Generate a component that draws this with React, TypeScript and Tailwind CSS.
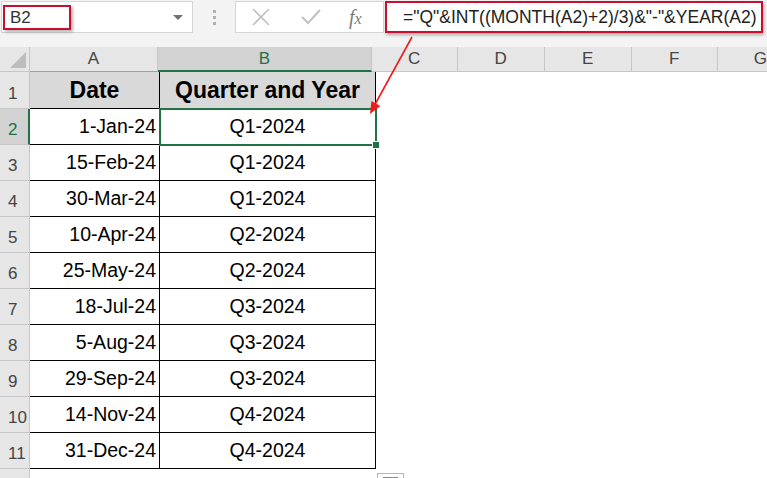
import React from "react";

const dates = ["1-Jan-24","15-Feb-24","30-Mar-24","10-Apr-24","25-May-24","18-Jul-24","5-Aug-24","29-Sep-24","14-Nov-24","31-Dec-24"];
const quarters = ["Q1-2024","Q1-2024","Q1-2024","Q2-2024","Q2-2024","Q3-2024","Q3-2024","Q3-2024","Q4-2024","Q4-2024"];

export default function App() {
  return (
    <div className="relative w-[767px] h-[478px] overflow-hidden bg-white font-['Liberation_Sans',Arial,sans-serif] text-black">
      {/* Toolbar */}
      <div className="h-[47px] bg-[#f3f3f3] flex items-start pt-[1px]">
        <div className="ml-[1px] w-[192px] h-[32px] bg-white border border-[#d6d6d6] flex items-center pl-[1px] pr-[9px]">
          <div className="w-[68px] h-[25px] border-2 border-[#c8102e] shadow-[2px_2px_3px_rgba(0,0,0,0.3)] flex items-center pl-[5px] text-[17px] text-[#333] leading-none">B2</div>
          <div className="flex-1" />
          <div className="w-0 h-0 border-l-[5px] border-r-[5px] border-t-[5px] border-l-transparent border-r-transparent border-t-[#707070]" />
        </div>
        <div className="w-[42px] h-[32px] flex flex-col items-center justify-center gap-[3px]">
          <div className="w-[3px] h-[3px] bg-[#b0b0b0]" />
          <div className="w-[3px] h-[3px] bg-[#b0b0b0]" />
          <div className="w-[3px] h-[3px] bg-[#b0b0b0]" />
        </div>
        <div className="w-[149px] h-[32px] bg-white border border-[#d6d6d6] flex items-center">
          <svg width="20" height="18" viewBox="0 0 20 18" className="ml-[15px]">
            <path d="M2 1 L18 17 M18 1 L2 17" stroke="#c0c0c0" strokeWidth="1.6" fill="none" />
          </svg>
          <svg width="22" height="18" viewBox="0 0 22 18" className="ml-[29px]">
            <path d="M2 9 L8 15 L20 2" stroke="#c0c0c0" strokeWidth="2" fill="none" />
          </svg>
          <span className="ml-[27px] font-['Liberation_Serif',serif] italic text-[20px] text-[#7a7a7a] leading-none">
            f<span className="text-[16px]">x</span>
          </span>
        </div>
        <div className="ml-[1px] w-[378px] h-[32px] bg-white border-2 border-[#c8102e] shadow-[1px_2px_3px_rgba(0,0,0,0.3)] flex items-center pl-[16px] text-[17.5px] text-[#222] whitespace-nowrap">
          ="Q"&amp;INT((MONTH(A2)+2)/3)&amp;"-"&amp;YEAR(A2)
        </div>
      </div>

      {/* Column headers */}
      <div className="flex h-[25px] bg-[#e6e6e6] text-[17px] text-[#444]">
        <div className="w-[30px] h-full border-r border-b border-[#c6c6c6] relative">
          <svg width="30" height="25" className="absolute left-0 top-0">
            <polygon points="26,5 26,21 10,21" fill="#bdbdbd" />
          </svg>
        </div>
        <div className="w-[130px] h-full border-r border-b border-[#c6c6c6] border-b-[#9e9e9e] flex items-center justify-center">A</div>
        <div className="w-[216px] h-full border-r border-[#c6c6c6] border-b-2 border-b-[#217346] bg-[#d2d2d2] text-[#217346] flex items-center justify-center">B</div>
        <div className="w-[87px] h-full border-r border-b border-[#c6c6c6] flex items-center justify-center">C</div>
        <div className="w-[88px] h-full border-r border-b border-[#c6c6c6] flex items-center justify-center">D</div>
        <div className="w-[88px] h-full border-r border-b border-[#c6c6c6] flex items-center justify-center">E</div>
        <div className="w-[87px] h-full border-r border-b border-[#c6c6c6] flex items-center justify-center">F</div>
        <div className="flex-1 h-full border-b border-[#c6c6c6] flex items-center pl-[36px]">G</div>
      </div>

      {/* Row 1 */}
      <div className="flex h-[37px]">
        <div className="w-[30px] h-full bg-[#e6e6e6] border-r border-b border-[#c6c6c6] flex items-end pl-[8px] pb-[2px] text-[17px] text-[#444]">1</div>
        <div className="w-[130px] h-full bg-[#d9d9d9] border-r border-b border-black flex items-center justify-center font-bold text-[23px]">Date</div>
        <div className="w-[216px] h-full bg-[#d9d9d9] border-r border-b border-black flex items-center justify-center font-bold text-[23px]">Quarter and Year</div>
        <div className="flex-1" />
      </div>

      {dates.map((d, i) => {
        const sel = i === 0;
        return (
          <div key={d} className="flex h-[36px]">
            <div className={sel
              ? "w-[30px] h-full bg-[#d2d2d2] border-r-2 border-r-[#217346] border-b border-b-[#c6c6c6] flex items-end pl-[8px] pb-[2px] text-[17px] text-[#217346]"
              : "w-[30px] h-full bg-[#e6e6e6] border-r border-b border-[#c6c6c6] flex items-end pl-[8px] pb-[2px] text-[17px] text-[#444]"}>{i + 2}</div>
            <div className="w-[130px] h-full border-r border-b border-black flex items-center justify-end pr-[3px] text-[19.5px]">{d}</div>
            <div className={sel
              ? "relative w-[216px] h-full border-r border-b border-black outline-2 outline-[#217346] -outline-offset-1 flex items-center justify-center text-[19.5px]"
              : "w-[216px] h-full border-r border-b border-black flex items-center justify-center text-[19.5px]"}>
              {quarters[i]}
              {sel && <div className="absolute right-[-5px] bottom-[-5px] w-[8px] h-[8px] bg-[#217346] border border-white" />}
            </div>
            <div className="flex-1" />
          </div>
        );
      })}

      {/* Row 12 partial */}
      <div className="flex h-[20px]">
        <div className="w-[30px] h-full bg-[#e6e6e6] border-r border-[#c6c6c6]" />
        <div className="flex-1" />
      </div>

      {/* Quick analysis icon */}
      <div className="absolute left-[377px] top-[473px] w-[27px] h-[10px] border border-[#b5b5b5] bg-white">
        <div className="mt-[3px] mx-auto w-[15px] h-[1px] bg-[#8a8a8a]" />
      </div>

      {/* Arrow */}
      <svg className="absolute left-0 top-0 pointer-events-none" width="767" height="478">
        <line x1="412" y1="37" x2="375.5" y2="103.5" stroke="#ee1c1c" strokeWidth="1.6" />
        <polygon points="370,114 380.3,105.9 371.4,100.9" fill="#ee1c1c" />
      </svg>
    </div>
  );
}
